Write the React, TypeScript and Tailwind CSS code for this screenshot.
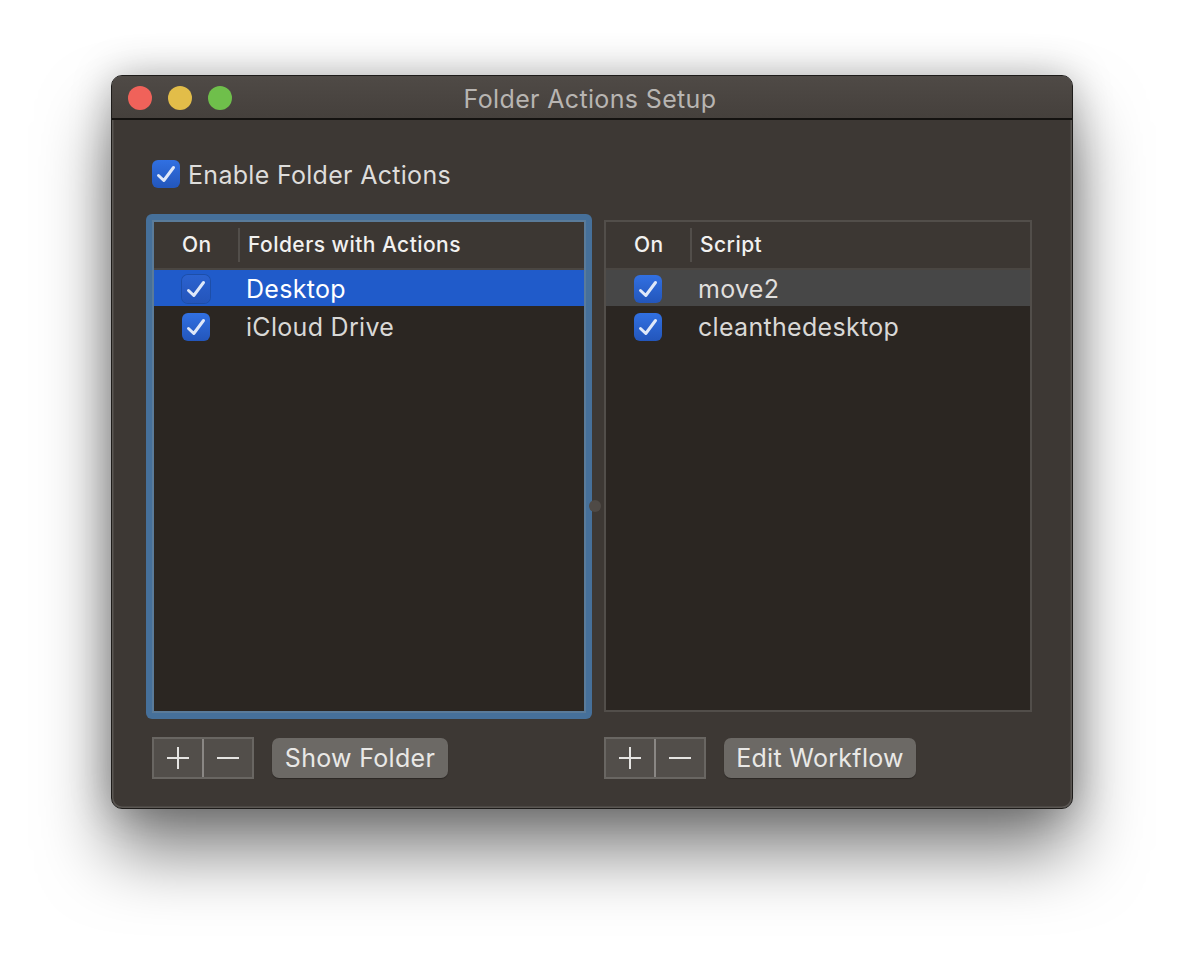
import React from "react";

const font = "font-['Inter','Liberation_Sans',sans-serif]";

const CheckBox = ({ dim }: { dim?: boolean }) => (
    <div
        className={`w-7 h-7 rounded-[6px] shrink-0 ${
            dim
                ? "bg-gradient-to-b from-[#2b62cf] to-[#2455bb] shadow-[0_0_0_1px_#1d4ea8]"
                : "bg-gradient-to-b from-[#3170e2] to-[#2356bb]"
        }`}
    >
        <svg width="28" height="28" viewBox="0 0 28 28" fill="none">
            <path
                d="M6.5 15.5L11.8 20.5L21.5 7.5"
                stroke="#dfe8f9"
                strokeWidth="3"
                strokeLinecap="round"
                strokeLinejoin="round"
            />
        </svg>
    </div>
);

interface PanelProps {
    title: string;
    rows: string[];
    selectedClass: string;
    selectedText: string;
    dimFirst?: boolean;
    frame: string;
}

const Panel: React.FC<PanelProps> = ({ title, rows, selectedClass, selectedText, dimFirst, frame }) => (
    <div className={`${frame} border-2 bg-[#2b2622] flex flex-col`}>
        <div className="h-[48px] shrink-0 bg-[#3c3733] border-b-2 border-[#4a4642] flex items-center">
            <div className="w-[86px] h-[34px] border-r-2 border-[#524e4a] flex items-center pl-[28px]">
                <span className="text-[21px] font-medium text-[#f2f1f0] tracking-[0.4px]">On</span>
            </div>
            <span className="pl-2 text-[21px] font-medium text-[#f2f1f0] tracking-[0.45px]">{title}</span>
        </div>
        {rows.map((row, i) => (
            <div
                key={row}
                className={`pl-[28px] ${i === 0 ? `h-[36px] pt-[5px] ${selectedClass}` : "h-[38px] pt-[7px]"}`}
            >
                <div className="h-7 flex items-center">
                    <CheckBox dim={dimFirst && i === 0} />
                    <span className={`pl-[36px] pt-[2px] text-[25px] tracking-[0.3px] ${i === 0 ? selectedText : "text-[#d9d8d6]"}`}>
                        {row}
                    </span>
                </div>
            </div>
        ))}
    </div>
);

const AddRemove = () => (
    <div className="w-[102px] h-[42px] border-2 border-[#696662] bg-[#524e4a] flex">
        <div className="w-[50px] h-full border-r-2 border-[#8a8784] flex items-center justify-center">
            <svg width="24" height="24" viewBox="0 0 24 24" fill="none">
                <path d="M12 1V23M1 12H23" stroke="#e6e5e3" strokeWidth="2" />
            </svg>
        </div>
        <div className="flex-1 flex items-center justify-center">
            <svg width="24" height="24" viewBox="0 0 24 24" fill="none">
                <path d="M1 12H23" stroke="#e6e5e3" strokeWidth="2" />
            </svg>
        </div>
    </div>
);

const PushButton = ({ label, width }: { label: string; width: string }) => (
    <div className={`${width} h-10 rounded-[7px] bg-[#6c6965] shadow-[0_1px_1px_rgba(0,0,0,0.3)] flex items-center justify-center`}>
        <span className="pt-[2px] text-[25px] text-[#e9e8e6] tracking-[0.3px]">{label}</span>
    </div>
);

export default function App() {
    return (
        <div className={`${font} w-[1184px] h-[956px] bg-white pt-[76px] pl-[112px] overflow-hidden`}>
            <div className="w-[960px] h-[732px] rounded-[10px] bg-[#3d3834] outline outline-1 outline-[#1e1c1a] shadow-[inset_0_0_0_1.5px_#5b5753,0_44px_70px_rgba(0,0,0,0.5),0_0_40px_rgba(0,0,0,0.28)] flex flex-col">
                {/* Title bar */}
                <div className="h-[44px] shrink-0 pt-[2px] rounded-t-[10px] bg-gradient-to-b from-[#4f4a46] to-[#45403c] border-b-2 border-[#141210] flex items-center pl-4 relative">
                    <div className="flex gap-4">
                        <div className="w-6 h-6 rounded-full bg-[#f0625a]" />
                        <div className="w-6 h-6 rounded-full bg-[#e2bd49]" />
                        <div className="w-6 h-6 rounded-full bg-[#6fbf4b]" />
                    </div>
                    <span className="absolute left-0 right-0 mt-1 pr-[4px] text-center text-[25px] text-[#b8b5b2] tracking-[0.35px]">
                        Folder Actions Setup
                    </span>
                </div>

                {/* Enable checkbox */}
                <div className="flex items-center gap-2 pl-10 pt-10 h-[68px]">
                    <CheckBox />
                    <span className="mt-1 text-[25px] text-[#dedddb] tracking-[0.3px]">Enable Folder Actions</span>
                </div>

                {/* Tables */}
                <div className="flex items-start pl-[34px] mt-[26px]">
                    <div className="p-[6px] bg-[#46709a] rounded-[6px]">
                        <Panel
                            title="Folders with Actions"
                            rows={["Desktop", "iCloud Drive"]}
                            selectedClass="bg-[#205bca]"
                            selectedText="text-white"
                            dimFirst
                            frame="w-[434px] h-[493px] border-[#5a7b9a]"
                        />
                    </div>
                    {/* split view handle */}
                    <div className="w-3 relative">
                        <div className="absolute left-[-3px] top-[286px] w-3 h-3 rounded-full bg-[#4f4a46]" />
                    </div>
                    <div className="pt-[6px]">
                        <Panel
                            title="Script"
                            rows={["move2", "cleanthedesktop"]}
                            selectedClass="bg-[#474747]"
                            selectedText="text-[#e0dfdd]"
                            frame="w-[428px] h-[492px] border-[#524e4a]"
                        />
                    </div>
                </div>

                {/* Bottom buttons */}
                <div className="flex items-center mt-[18px] pl-10">
                    <AddRemove />
                    <div className="ml-[18px]">
                        <PushButton label="Show Folder" width="w-[176px]" />
                    </div>
                    <div className="ml-[156px]">
                        <AddRemove />
                    </div>
                    <div className="ml-[18px]">
                        <PushButton label="Edit Workflow" width="w-[192px]" />
                    </div>
                </div>
            </div>
        </div>
    );
}
